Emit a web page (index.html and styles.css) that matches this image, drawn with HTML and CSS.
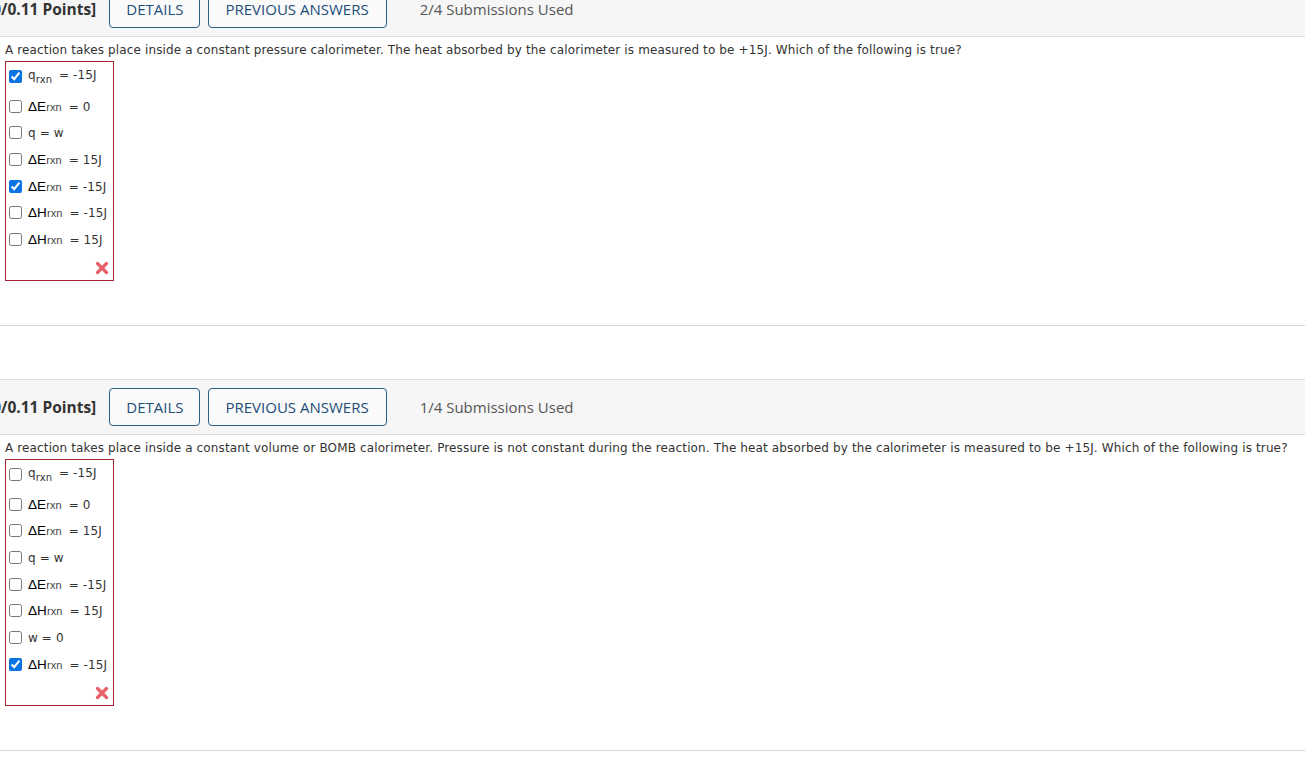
FILE: index.html
```html
<!DOCTYPE html>
<html>
<head>
<meta charset="utf-8">
<link rel="stylesheet" href="styles.css">
</head>
<body>
<div class="page">
  <section class="question">
    <div class="qhead">
      <span class="points">[0/0.11 Points]</span>
      <button class="btn btn-details">DETAILS</button>
      <button class="btn">PREVIOUS ANSWERS</button>
      <span class="subs">2/4 Submissions Used</span>
    </div>
    <div class="qbody">
      <p class="prompt">A reaction takes place inside a constant pressure calorimeter. The heat absorbed by the calorimeter is measured to be +15J. Which of the following is true?</p>
      <div class="answers">
        <label class="opt opt-q"><input type="checkbox" checked><span>q<sub>rxn</sub> = -15J</span></label>
        <label class="opt"><input type="checkbox"><span><b class="sym">ΔE</b><small>rxn</small> = 0</span></label>
        <label class="opt"><input type="checkbox"><span>q = w</span></label>
        <label class="opt"><input type="checkbox"><span><b class="sym">ΔE</b><small>rxn</small> = 15J</span></label>
        <label class="opt"><input type="checkbox" checked><span><b class="sym">ΔE</b><small>rxn</small> = -15J</span></label>
        <label class="opt"><input type="checkbox"><span><b class="sym">ΔH</b><small>rxn</small> = -15J</span></label>
        <label class="opt"><input type="checkbox"><span><b class="sym">ΔH</b><small>rxn</small> = 15J</span></label>
        <div class="mark"><svg width="14" height="14" viewBox="0 0 14 14"><path d="M2.5 2.5 L11.5 11.5 M11.5 2.5 L2.5 11.5" stroke="#e8606a" stroke-width="3.2" stroke-linecap="round"/></svg></div>
      </div>
    </div>
  </section>

  <section class="question">
    <div class="qhead">
      <span class="points">[0/0.11 Points]</span>
      <button class="btn btn-details">DETAILS</button>
      <button class="btn">PREVIOUS ANSWERS</button>
      <span class="subs">1/4 Submissions Used</span>
    </div>
    <div class="qbody">
      <p class="prompt">A reaction takes place inside a constant volume or BOMB calorimeter. Pressure is not constant during the reaction. The heat absorbed by the calorimeter is measured to be +15J. Which of the following is true?</p>
      <div class="answers">
        <label class="opt opt-q"><input type="checkbox"><span>q<sub>rxn</sub> = -15J</span></label>
        <label class="opt"><input type="checkbox"><span><b class="sym">ΔE</b><small>rxn</small> = 0</span></label>
        <label class="opt"><input type="checkbox"><span><b class="sym">ΔE</b><small>rxn</small> = 15J</span></label>
        <label class="opt"><input type="checkbox"><span>q = w</span></label>
        <label class="opt"><input type="checkbox"><span><b class="sym">ΔE</b><small>rxn</small> = -15J</span></label>
        <label class="opt"><input type="checkbox"><span><b class="sym">ΔH</b><small>rxn</small> = 15J</span></label>
        <label class="opt"><input type="checkbox"><span>w = 0</span></label>
        <label class="opt"><input type="checkbox" checked><span><b class="sym">ΔH</b><small>rxn</small> = -15J</span></label>
        <div class="mark"><svg width="14" height="14" viewBox="0 0 14 14"><path d="M2.5 2.5 L11.5 11.5 M11.5 2.5 L2.5 11.5" stroke="#e8606a" stroke-width="3.2" stroke-linecap="round"/></svg></div>
      </div>
    </div>
  </section>
</div>
</body>
</html>
```
FILE: styles.css
```css
html, body {
  margin: 0;
  padding: 0;
  background: #fff;
  overflow: hidden;
}
body {
  font-family: "DejaVu Sans", Verdana, sans-serif;
  color: #333;
}
.page {
  margin-top: -19px;
}
.question {
  border-bottom: 1px solid #d6d6d6;
  margin-bottom: 53px;
}
.qhead {
  display: flex;
  align-items: center;
  height: 54px;
  background: #f6f6f6;
  border-top: 1px solid #dcdcdc;
  border-bottom: 1px solid #dcdcdc;
  font-family: "Open Sans", sans-serif;
  font-size: 15px;
}
.points {
  font-weight: bold;
  font-size: 15.5px;
  color: #333;
  margin-left: -13px;
  margin-right: 13px;
  white-space: nowrap;
}
.btn {
  font-family: "Open Sans", sans-serif;
  font-size: 15px;
  font-weight: 500;
  color: #1d4d78;
  background: #fafafa;
  border: 1px solid #2d5e83;
  border-radius: 4px;
  height: 38px;
  padding: 0 16px;
  margin-right: 8px;
}
.btn + .btn {
  padding: 0 17px 0 16px;
}
.subs {
  margin-left: 25px;
  color: #555;
}
.qbody {
  padding: 0 5px 44px 5px;
}
.prompt {
  margin: 0;
  padding: 5px 0 3px 0;
  font-size: 12px;
  line-height: 16px;
  letter-spacing: 0.13px;
  color: #333;
}
.answers {
  width: 107px;
  border: 1px solid #a8262f;
  padding: 0;
}
.opt {
  display: flex;
  align-items: center;
  height: 26.67px;
  font-size: 12px;
  letter-spacing: 0.1px;
  color: #333;
}
.opt input {
  margin: 0 6px 0 3px;
  width: 13px;
  height: 13px;
  accent-color: #0b74e5;
  flex: none;
}
.opt-q {
  height: 31px;
  align-items: flex-start;
}
.opt.opt-q input {
  margin-top: 8px;
}
.opt.opt-q span {
  margin-top: 6px;
}
.opt span {
  white-space: nowrap;
}
.opt sub {
  font-size: 10px;
  vertical-align: -4px;
  margin-right: 3px;
}
.sym {
  font-family: "Liberation Sans", Arial, sans-serif;
  font-weight: normal;
  font-size: 13.5px;
  color: #000;
}
.opt small {
  font-family: "Liberation Sans", Arial, sans-serif;
  font-size: 11px;
  color: #444;
  margin-right: 3px;
}
.mark {
  display: flex;
  justify-content: flex-end;
  padding: 8px 4px 0 0;
  height: 19px;
}
```
